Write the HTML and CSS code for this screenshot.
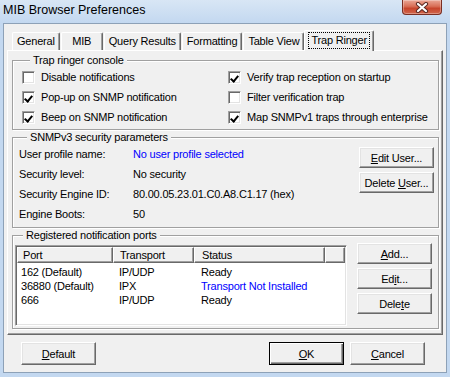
FILE: index.html
```html
<!DOCTYPE html>
<html>
<head>
	<meta charset="utf-8">
	<title>MIB Browser Preferences</title>
	<link rel="stylesheet" href="styles.css">
</head>
<body>
	<div class="window">
		<div class="titlebar">
			<span class="title">MIB Browser Preferences</span>
			<div class="close">
				<svg width="14" height="11" viewBox="0 0 14 11">
					<path d="M3 2 L11 9 M11 2 L3 9" stroke="#5a2a24" stroke-width="4.2" stroke-linecap="round"/>
					<path d="M3 2 L11 9 M11 2 L3 9" stroke="#fff" stroke-width="2.2" stroke-linecap="round"/>
				</svg>
			</div>
		</div>

		<div class="client">
			<div class="tabs">
				<div class="tab">General</div>
				<div class="tab">MIB</div>
				<div class="tab">Query Results</div>
				<div class="tab">Formatting</div>
				<div class="tab">Table View</div>
				<div class="tab active"><span class="focus">Trap Ringer</span></div>
			</div>

			<div class="panel">
				<!-- console options -->
				<fieldset class="group group-console">
					<legend>Trap ringer console</legend>
					<div class="checks">
						<div class="check"><span class="box"></span>Disable notifications</div>
						<div class="check"><span class="box on"></span>Pop-up on SNMP notification</div>
						<div class="check"><span class="box on"></span>Beep on SNMP notification</div>
						<div class="check"><span class="box on"></span>Verify trap reception on startup</div>
						<div class="check"><span class="box"></span>Filter verification trap</div>
						<div class="check"><span class="box on"></span>Map SNMPv1 traps through enterprise</div>
					</div>
				</fieldset>

				<!-- snmpv3 -->
				<fieldset class="group group-security">
					<legend>SNMPv3 security parameters</legend>
					<div class="info">
						<span>User profile name:</span><span class="link">No user profile selected</span>
						<span>Security level:</span><span>No security</span>
						<span>Security Engine ID:</span><span>80.00.05.23.01.C0.A8.C1.17 (hex)</span>
						<span>Engine Boots:</span><span>50</span>
					</div>
					<div class="side">
						<button class="btn"><u>E</u>dit User...</button>
						<button class="btn">Delete <u>U</u>ser...</button>
					</div>
				</fieldset>

				<!-- ports -->
				<fieldset class="group group-ports">
					<legend>Registered notification ports</legend>
					<div class="list">
						<div class="list-head">
							<span class="col-port">Port</span>
							<span class="col-transport">Transport</span>
							<span class="col-status">Status</span>
							<span class="col-fill"></span>
						</div>
						<div class="row"><span class="col-port">162 (Default)</span><span class="col-transport">IP/UDP</span><span class="col-status">Ready</span></div>
						<div class="row"><span class="col-port">36880 (Default)</span><span class="col-transport">IPX</span><span class="col-status link">Transport Not Installed</span></div>
						<div class="row"><span class="col-port">666</span><span class="col-transport">IP/UDP</span><span class="col-status">Ready</span></div>
					</div>
					<div class="side">
						<button class="btn"><u>A</u>dd...</button>
						<button class="btn">Ed<u>i</u>t...</button>
						<button class="btn">Dele<u>t</u>e</button>
					</div>
				</fieldset>
			</div>

			<div class="footer">
				<button class="btn big"><u>D</u>efault</button>
				<div class="footer-right">
					<button class="btn big default"><u>O</u>K</button>
					<button class="btn big"><u>C</u>ancel</button>
				</div>
			</div>
		</div>
	</div>
</body>
</html>
```

FILE: styles.css
```css
*{
	box-sizing: border-box;
}
body{
	margin: 0;
	font-family: "Liberation Sans", Arial, sans-serif;
	font-size: 11px;
	letter-spacing: -0.2px;
	color: #000;
}
.window{
	width: 450px;
	height: 377px;
	overflow: hidden;
	display: flex;
	flex-direction: column;
	background: #c3d8f0;
}
.titlebar{
	height: 23px;
	flex: none;
	display: flex;
	justify-content: space-between;
	align-items: flex-start;
	background: linear-gradient(#d8e6f5, #c3d8f0);
}
.title{
	font-size: 12.5px;
	letter-spacing: 0;
	line-height: 16px;
	padding: 2px 0 0 3px;
}
.close{
	width: 40px;
	height: 15px;
	margin-right: 8px;
	display: flex;
	align-items: center;
	justify-content: center;
	border: 1px solid #7a2e22;
	border-top: none;
	border-radius: 0 0 4px 4px;
	background: linear-gradient(#eaa796, #d86f57 45%, #c7452c 60%, #d0664c);
	box-shadow: inset 0 0 0 1px rgba(255,255,255,0.3);
}

.client{
	margin: 0 3px;
	height: 350px;
	flex: none;
	background: #f0f0f0;
	border: 1px solid #8da1b7;
	padding: 6px 3px 0 3px;
}

/* tabs */
.tabs{
	height: 20px;
	display: flex;
	align-items: flex-end;
	padding-left: 5px;
	position: relative;
	z-index: 1;
}
.tab{
	height: 18px;
	min-width: 42px;
	padding: 0 4px;
	text-align: center;
	line-height: 17px;
	white-space: nowrap;
	border: 1px solid #fff;
	border-right-color: #696969;
	border-bottom: none;
	border-radius: 2px 2px 0 0;
	box-shadow: inset -1px 0 #a0a0a0;
	margin-right: 1px;
}
.tab.active{
	height: 21px;
	margin: 0 -2px -1px -1px;
	padding: 1px 3px 0 3px;
	line-height: 15px;
	background: #f0f0f0;
}
.focus{
	display: inline-block;
	padding: 0 2px;
	border: 1px dotted #000;
}

.panel{
	height: 285px;
	border: 1px solid #fff;
	border-right-color: #696969;
	border-bottom-color: #696969;
	box-shadow: inset -1px -1px #a0a0a0;
	padding: 3px 3px 0 4px;
}

/* group boxes */
.group{
	margin: 0;
	padding: 0;
	min-width: 0;
	border: 1px solid #a0a0a0;
	box-shadow: inset 1px 1px #fff, 1px 1px #fff;
}
.group legend{
	margin-left: 8px;
	padding: 0 3px;
	line-height: 13px;
	background: #f0f0f0;
}
.group-console{
	padding: 0 0 2px 9px;
}
.checks{
	display: grid;
	grid-template-columns: 206px auto;
	grid-template-rows: repeat(3, 20px);
	grid-auto-flow: column;
}
.check{
	display: flex;
	align-items: center;
	white-space: nowrap;
}
.box{
	width: 13px;
	height: 13px;
	margin-right: 6px;
	background: #fff;
	border: 1px solid;
	border-color: #a0a0a0 #fff #fff #a0a0a0;
	box-shadow: inset 1px 1px #696969, inset -1px -1px #e3e3e3;
	position: relative;
}
.box.on::after{
	content: "";
	position: absolute;
	left: 3px;
	top: 2px;
	width: 3px;
	height: 6px;
	border: solid #000;
	border-width: 0 2px 2px 0;
	transform: rotate(40deg);
}

.group-security{
	margin-top: 1px;
	display: flex;
	padding: 0 4px 3px 6px;
}
.info{
	flex: 1;
	display: grid;
	grid-template-columns: 114px auto;
	grid-auto-rows: 20px;
	align-items: center;
}
.link{
	color: #0000ff;
}
.side{
	display: flex;
	flex-direction: column;
	gap: 4px;
	padding-top: 3px;
}

.btn{
	width: 75px;
	height: 21px;
	padding: 0;
	font: inherit;
	letter-spacing: inherit;
	color: #000;
	background: #f0f0f0;
	border: 1px solid;
	border-color: #fff #696969 #696969 #fff;
	box-shadow: inset -1px -1px #a0a0a0, inset 1px 1px #e3e3e3;
}
.btn.big{
	height: 23px;
	width: 75px;
}
.btn.default{
	border: 1px solid #000;
	box-shadow: inset 1px 1px #fff, inset -1px -1px #696969, inset -2px -2px #a0a0a0;
}

.group-ports{
	margin-top: 1px;
	display: flex;
	padding: 3px 4px 2px 2px;
}
.group-ports .side{
	padding-top: 0;
	margin-top: -2px;
}
.list{
	width: 332px;
	height: 81px;
	margin-right: 10px;
	background: #fff;
	border: 1px solid;
	border-color: #a0a0a0 #fff #fff #a0a0a0;
	box-shadow: inset 1px 1px #696969, inset -1px -1px #e3e3e3;
	padding: 1px;
}
.list-head{
	display: flex;
	height: 16px;
	margin-bottom: 2px;
}
.list-head span{
	height: 16px;
	line-height: 15px;
	padding-left: 5px;
	background: #f0f0f0;
	border: 1px solid;
	border-color: #fff #696969 #696969 #fff;
	box-shadow: inset -1px -1px #a0a0a0;
}
.row{
	display: flex;
	height: 14px;
	line-height: 14px;
	white-space: nowrap;
}
.row span{
	padding-left: 4px;
}
.col-port{ width: 96px; }
.col-transport{ width: 81px; padding-left: 6px !important; }
.col-status{ width: 131px; padding-left: 7px !important; }
.col-fill{ flex: 1; }

.footer{
	margin-top: 7px;
	display: flex;
	justify-content: space-between;
	padding: 0 18px 0 14px;
}
.footer-right{
	display: flex;
	gap: 6px;
}
```
